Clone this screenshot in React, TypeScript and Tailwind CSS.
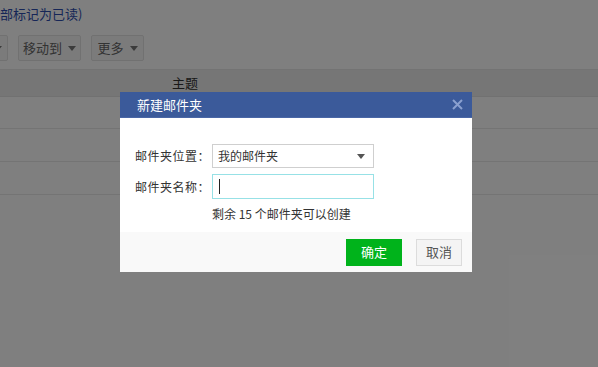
const font = { fontFamily: '"Noto Sans CJK SC", "Noto Sans", sans-serif' };

const Caret = ({ className = "" }: { className?: string }) => (
    <span
        className={`inline-block shrink-0 w-0 h-0 border-l-[4px] border-r-[4px] border-t-[5px] border-l-transparent border-r-transparent ${className}`}
    />
);

const ToolButton = ({ label, className = "" }: { label?: string; className?: string }) => (
    <div
        className={`flex shrink-0 items-center justify-center gap-[6px] h-[26px] border border-[#e2e2e2] rounded-[2px] bg-[#f7f7f7] text-[13px] text-[#666] whitespace-nowrap ${className}`}
    >
        {label}
        <Caret className="border-t-[#777]" />
    </div>
);

const Background = () => (
    <div className="w-full">
        <div className="h-[28px] pt-[5px] text-[13px] text-[#2d4dae] leading-[18px]">部标记为已读)</div>
        <div className="flex gap-[10px] pt-[7px] pb-[8px] border-b border-[#e6e6e6]">
            <ToolButton className="w-[40px] -ml-[32px] !justify-end pr-[5px]" />
            <ToolButton label="移动到" className="w-[63px]" />
            <ToolButton label="更多" className="w-[53px]" />
        </div>
        <div className="h-[27px] bg-[#ececec] border-b border-[#e2e2e2] text-[13px] text-[#333] flex items-center pl-[172px]">
            主题
        </div>
        <div className="h-[32px] border-b border-[#e8e8e8]" />
        <div className="h-[33px] border-b border-[#e8e8e8]" />
        <div className="h-[33px] border-b border-[#e8e8e8]" />
    </div>
);

const Dialog = () => (
    <div className="absolute left-[120px] top-[92px] w-[352px] bg-white">
        <div className="h-[26px] bg-[#3b5a9a] border-b border-[#4a67a6] flex items-center justify-between pl-[17px] pr-[9px]">
            <span className="text-[13px] text-white">新建邮件夹</span>
            <svg width="11" height="11" viewBox="0 0 11 11" className="text-[#8aa0cf]">
                <path d="M1 1 L10 10 M10 1 L1 10" stroke="currentColor" strokeWidth="2" />
            </svg>
        </div>
        <div className="pt-[26px] pb-[9px] pl-[15px] text-[12px] text-[#333]">
            <div className="flex items-center h-[24px]">
                <span className="w-[77px] tracking-[0.5px]">邮件夹位置：</span>
                <div className="w-[162px] h-[24px] border border-[#cfcfcf] flex items-center justify-between pl-[5px] pr-[8px]">
                    <span>我的邮件夹</span>
                    <Caret className="border-t-[#555]" />
                </div>
            </div>
            <div className="flex items-center h-[25px] mt-[6px]">
                <span className="w-[77px] tracking-[0.5px]">邮件夹名称：</span>
                <div className="w-[162px] h-[25px] border border-[#97e1e6] flex items-center pl-[6px]">
                    <span className="w-px h-[15px] bg-[#222]" />
                </div>
            </div>
            <div className="pl-[77px] mt-[6px] leading-[18px] text-[12px]">剩余 15 个邮件夹可以创建</div>
        </div>
        <div className="h-[40px] bg-[#f9f9f9] flex items-center justify-end gap-[14px] pr-[10px]">
            <button className="w-[56px] h-[27px] bg-[#00b31b] text-white text-[13px]">确定</button>
            <button className="w-[46px] h-[27px] bg-[#f4f4f4] border border-[#dcdcdc] text-[#555] text-[13px]">取消</button>
        </div>
    </div>
);

const App = () => (
    <div className="relative w-[598px] h-[367px] overflow-hidden bg-white" style={font}>
        <Background />
        <div className="absolute inset-0 bg-black/50" />
        <Dialog />
    </div>
);

export default App;
